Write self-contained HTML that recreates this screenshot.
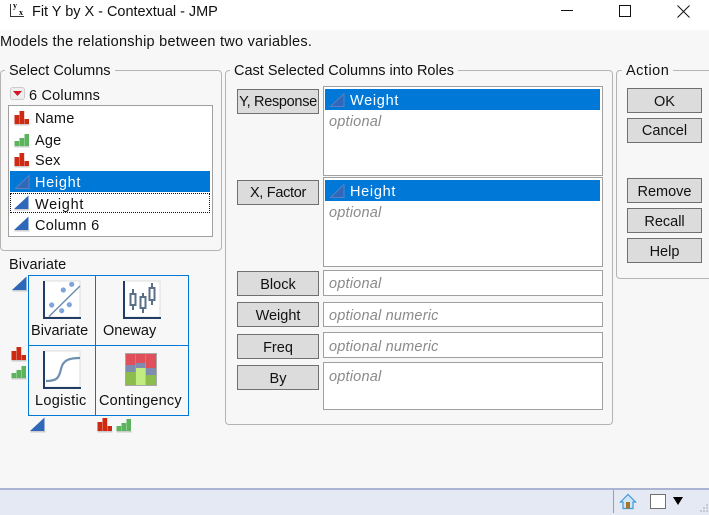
<!DOCTYPE html>
<html><head><meta charset="utf-8"><style>
html,body{margin:0;padding:0}
body{width:709px;height:515px;overflow:hidden;position:relative;background:#f7f7f7;font-family:"Liberation Sans",sans-serif;font-size:14.5px;color:#111}
.a{position:absolute}
.t{position:absolute;white-space:nowrap;line-height:18px;height:18px}
.grp{position:absolute;border:1px solid #b4b4b4;border-radius:4px;box-sizing:border-box}
.lg{position:absolute;background:#f7f7f7;padding:0 4px;white-space:nowrap;line-height:18px;top:-9px}
.btn{position:absolute;box-sizing:border-box;background:#dcdcdc;border:1px solid #707070;text-align:center;line-height:25px;white-space:nowrap}
.box{position:absolute;box-sizing:border-box;background:#fff;border:1px solid #a0a0a0}
.sel{position:absolute;background:#0078d7;color:#fff}
.opt{position:absolute;color:#8a8a8a;font-style:italic;white-space:nowrap;line-height:18px;letter-spacing:.2px}
svg{position:absolute;overflow:visible}
.w{letter-spacing:.7px}
</style></head><body>
<svg width="0" height="0" style="position:absolute"><defs>
<g id="nom"><path d="M.5 14.800h15" stroke="#aaa" stroke-width="1.200" opacity=".7"/><path d="M.5 5h4.700v9H.5z M5.500 1h4.700v13H5.500z M10.500 9h4.500v5h-4.500z" fill="#cc2a12"/></g>
<g id="ord"><path d="M.5 14.800h15" stroke="#aaa" stroke-width="1.200" opacity=".7"/><path d="M.5 9h4.700v5H.5z M5.500 6h4.700v8H5.500z M10.500 2h4.500v12h-4.500z" fill="#5bb45b"/></g>
<g id="con"><path d="M.5 14.800h15" stroke="#aaa" stroke-width="1.200" opacity=".7"/><path d="M0 14L14.500 .5V14z" fill="#2f68b8"/></g>
<g id="cons"><path d="M.5 14.500L14 1.500v13z" fill="#2f68b8" stroke="#5b7fc0" stroke-width="1"/></g>
</defs></svg>

<div class="a" style="left:0;top:0;width:709px;height:30px;background:#fff"></div>
<svg style="left:9px;top:3px" width="16" height="14"><path d="M1.500 1v12.500H15" fill="none" stroke="#333" stroke-width="1"/></svg>
<div class="t" style="left:13px;top:1px;font:bold 8px 'Liberation Serif',serif;line-height:10px;height:10px">y</div>
<div class="t" style="left:19px;top:8px;font:bold 8px 'Liberation Serif',serif;line-height:10px;height:10px">x</div>
<div class="t" style="left:32px;top:3px;letter-spacing:-.02px">Fit Y by X - Contextual - JMP</div>
<div class="a" style="left:561px;top:10px;width:12px;height:1px;background:#111"></div>
<div class="a" style="left:619px;top:5px;width:12px;height:12px;box-sizing:border-box;border:1px solid #111"></div>
<svg style="left:677px;top:5px" width="13" height="13"><path d="M.5.500l12 12M12.500.500l-12 12" stroke="#111" stroke-width="1" fill="none"/></svg>

<div class="t" style="left:0;top:33px;letter-spacing:.25px">Models the relationship between two variables.</div>

<!-- Select Columns -->
<div class="grp" style="left:0;top:70px;width:222px;height:181px">
<div class="lg" style="left:4px">Select Columns</div>
</div>
<div class="a" style="left:10px;top:87px;width:15px;height:13px;box-sizing:border-box;background:#eee;border:1px solid #ccc;border-radius:3px"></div>
<svg style="left:13px;top:91px" width="9" height="5"><path d="M0 0h9L4.500 5z" fill="#d4122a"/></svg>
<div class="t" style="left:29px;top:87px;letter-spacing:.2px">6 Columns</div>
<div class="box" style="left:8px;top:105px;width:205px;height:132px"></div>
<svg style="left:14px;top:110px" width="16" height="16"><use href="#nom"/></svg>
<div class="t" style="left:35px;top:110px;letter-spacing:.2px">Name</div>
<svg style="left:14px;top:132px" width="16" height="16"><use href="#ord"/></svg>
<div class="t" style="left:35px;top:132px;letter-spacing:.2px">Age</div>
<svg style="left:14px;top:152px" width="16" height="16"><use href="#nom"/></svg>
<div class="t" style="left:35px;top:152px;letter-spacing:.2px">Sex</div>
<div class="sel" style="left:10px;top:171px;width:200px;height:21px"></div>
<svg style="left:15px;top:174px" width="16" height="16"><use href="#cons"/></svg>
<div class="t w" style="left:35px;top:174px;color:#fff">Height</div>
<div class="a" style="left:10px;top:193px;width:200px;height:20px;box-sizing:border-box;border:1px dotted #111"></div>
<svg style="left:14px;top:195px" width="16" height="16"><use href="#con"/></svg>
<div class="t w" style="left:35px;top:196px">Weight</div>
<svg style="left:14px;top:216px" width="16" height="16"><use href="#con"/></svg>
<div class="t" style="left:35px;top:217px;letter-spacing:.3px">Column 6</div>

<!-- Platform grid -->
<div class="t" style="left:9px;top:256px;letter-spacing:.1px">Bivariate</div>
<div class="a" style="left:28px;top:275px;width:161px;height:141px;box-sizing:border-box;border:1px solid #0078d7"></div>
<div class="a" style="left:95px;top:275px;width:1px;height:141px;background:#0078d7"></div>
<div class="a" style="left:28px;top:345px;width:161px;height:1px;background:#0078d7"></div>
<svg style="left:12px;top:276px" width="16" height="16"><use href="#con"/></svg>
<svg style="left:11px;top:346px" width="16" height="16"><use href="#nom"/></svg>
<svg style="left:11px;top:364px" width="16" height="16"><use href="#ord"/></svg>
<svg style="left:30px;top:417px" width="16" height="16"><use href="#con"/></svg>
<svg style="left:97px;top:417px" width="16" height="16"><use href="#nom"/></svg>
<svg style="left:116px;top:417px" width="16" height="16"><use href="#ord"/></svg>

<svg style="left:43px;top:281px" width="38" height="38"><rect x="1" y="0" width="36" height="36" fill="#fff" stroke="#ddd"/><path d="M1 0v37h37" fill="none" stroke="#1f3d66" stroke-width="2"/><path d="M6 35.500L37 5" stroke="#6f8fb0" stroke-width="1.500"/><g fill="#7fa3dc"><circle cx="8.700" cy="24" r="2.600"/><circle cx="18.700" cy="29.700" r="2.600"/><circle cx="26.300" cy="23.700" r="2.600"/><circle cx="20.300" cy="9" r="2.600"/><circle cx="28.700" cy="3.300" r="2.600"/></g></svg>
<div class="t" style="left:31px;top:322px;letter-spacing:.1px">Bivariate</div>

<svg style="left:123px;top:281px" width="38" height="38"><rect x="1" y="0" width="36" height="36" fill="#fff" stroke="#ddd"/><path d="M1 0v37h37" fill="none" stroke="#1f3d66" stroke-width="2"/><g fill="#fff" stroke="#5a7088" stroke-width="2"><path d="M10 8v21M20 12v20M29 2v22" fill="none"/><rect x="7.500" y="13" width="5" height="11"/><rect x="17.500" y="16" width="5" height="11"/><rect x="26.500" y="7" width="5" height="12"/></g></svg>
<div class="t" style="left:103px;top:322px">Oneway</div>

<svg style="left:43px;top:351px" width="38" height="38"><rect x="1" y="0" width="36" height="36" fill="#fff" stroke="#ddd"/><path d="M1 0v37h37" fill="none" stroke="#1f3d66" stroke-width="2"/><path d="M3 30C14 30 16 27 18 18S26 7 37 7" fill="none" stroke="#6f8fb0" stroke-width="2.200"/></svg>
<div class="t" style="left:35px;top:392px;letter-spacing:.3px">Logistic</div>

<svg style="left:125px;top:353px" width="33" height="33"><rect x="0" y="0" width="32" height="33" fill="#a8a8a8"/><rect x="1" y="1" width="9.500" height="11" fill="#e0505a"/><rect x="1" y="12" width="9.500" height="7" fill="#7f8cb0"/><rect x="1" y="19" width="9.500" height="13" fill="#8cbc4c"/><rect x="11" y="1" width="9.500" height="9" fill="#e0505a"/><rect x="11" y="10" width="9.500" height="5" fill="#7f8cb0"/><rect x="11" y="15" width="9.500" height="17" fill="#c0ec80"/><rect x="21" y="1" width="10" height="14" fill="#e0505a"/><rect x="21" y="15" width="10" height="7" fill="#7f8cb0"/><rect x="21" y="22" width="10" height="10" fill="#8cbc4c"/></svg>
<div class="t" style="left:99px;top:392px;letter-spacing:.2px">Contingency</div>

<!-- Cast -->
<div class="grp" style="left:225px;top:70px;width:388px;height:355px">
<div class="lg" style="left:4px">Cast Selected Columns into Roles</div>
</div>
<div class="btn" style="left:237px;top:89px;width:82px;height:25px;letter-spacing:-.3px">Y, Response</div>
<div class="btn" style="left:237px;top:180px;width:82px;height:25px;letter-spacing:-.3px">X, Factor</div>
<div class="btn" style="left:237px;top:271px;width:82px;height:25px;line-height:26px">Block</div>
<div class="btn" style="left:237px;top:302px;width:82px;height:25px;line-height:26px">Weight</div>
<div class="btn" style="left:237px;top:334px;width:82px;height:25px;line-height:26px">Freq</div>
<div class="btn" style="left:237px;top:365px;width:82px;height:25px;line-height:26px">By</div>

<div class="box" style="left:323px;top:86px;width:280px;height:90px"></div>
<div class="sel" style="left:325px;top:89px;width:275px;height:21px"></div>
<svg style="left:330px;top:92px" width="16" height="16"><use href="#cons"/></svg>
<div class="t w" style="left:350px;top:92px;color:#fff">Weight</div>
<div class="opt" style="left:329px;top:113px">optional</div>

<div class="box" style="left:323px;top:177px;width:280px;height:90px"></div>
<div class="sel" style="left:325px;top:180px;width:275px;height:21px"></div>
<svg style="left:330px;top:183px" width="16" height="16"><use href="#cons"/></svg>
<div class="t w" style="left:350px;top:183px;color:#fff">Height</div>
<div class="opt" style="left:329px;top:204px">optional</div>

<div class="box" style="left:323px;top:270px;width:280px;height:26px"></div>
<div class="opt" style="left:329px;top:275px">optional</div>
<div class="box" style="left:323px;top:302px;width:280px;height:25px"></div>
<div class="opt" style="left:329px;top:307px">optional numeric</div>
<div class="box" style="left:323px;top:332px;width:280px;height:26px"></div>
<div class="opt" style="left:329px;top:338px">optional numeric</div>
<div class="box" style="left:323px;top:362px;width:280px;height:48px"></div>
<div class="opt" style="left:329px;top:368px">optional</div>

<!-- Action -->
<div class="grp" style="left:616px;top:70px;width:100px;height:209px">
<div class="lg" style="left:5px;letter-spacing:.5px">Action</div>
</div>
<div class="btn" style="left:627px;top:88px;width:75px;height:25px;line-height:26px">OK</div>
<div class="btn" style="left:627px;top:118px;width:75px;height:25px">Cancel</div>
<div class="btn" style="left:627px;top:178px;width:75px;height:25px;line-height:26px">Remove</div>
<div class="btn" style="left:627px;top:208px;width:75px;height:25px;line-height:26px">Recall</div>
<div class="btn" style="left:627px;top:238px;width:75px;height:25px;line-height:26px">Help</div>

<!-- Status -->
<div class="a" style="left:0;top:488px;width:709px;height:2px;background:#abb3d3"></div>
<div class="a" style="left:0;top:490px;width:709px;height:25px;background:#e4e9f3"></div>
<div class="a" style="left:613px;top:490px;width:1px;height:23px;background:#9a9fad"></div>
<svg style="left:620px;top:494px" width="16" height="15"><path d="M8 .500L.5 8H3v6.500h10V8h2.500z" fill="#cfe6f6" stroke="#3d9bd6" stroke-width="1.200"/><rect x="6" y="8" width="4" height="6.500" fill="#a5762a"/></svg>
<div class="a" style="left:650px;top:494px;width:16px;height:15px;box-sizing:border-box;background:#fff;border:1px solid #707070"></div>
<svg style="left:673px;top:497px" width="10" height="8"><path d="M0 0h10L5 8z" fill="#000"/></svg>
<svg style="left:697px;top:503px" width="12" height="12"><g fill="#c4c8d2"><rect x="9" y="1" width="2" height="2"/><rect x="6" y="4" width="2" height="2"/><rect x="9" y="4" width="2" height="2"/><rect x="3" y="7" width="2" height="2"/><rect x="6" y="7" width="2" height="2"/><rect x="9" y="7" width="2" height="2"/></g></svg>
</body></html>
